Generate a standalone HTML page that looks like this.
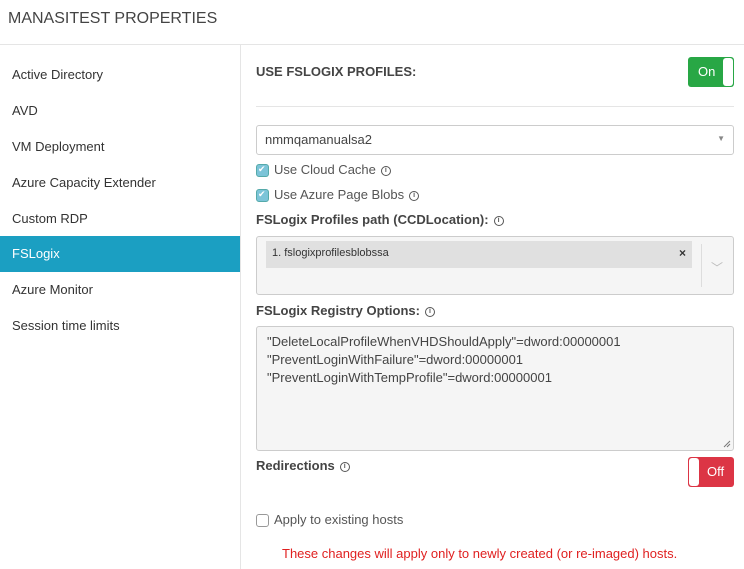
<!DOCTYPE html>
<html><head><style>
*{box-sizing:border-box;margin:0;padding:0}
body{width:744px;height:569px;overflow:hidden;background:#fff;font-family:"Liberation Sans",sans-serif;color:#333;font-size:13px;position:relative}
.hdr{position:absolute;left:0;top:0;width:744px;height:45px;border-bottom:1px solid #e5e5e5;padding:10px 8px;font-size:16px;color:#444}
.side{position:absolute;left:0;top:45px;width:241px;height:524px;border-right:1px solid #e5e5e5}
.side div{height:36px;line-height:36px;padding-left:12px;font-size:13px;color:#333}
.side .act{background:#1b9fc2;color:#fff}
.a{position:absolute}
.b{font-weight:bold;color:#444}
.tog{position:absolute;width:46px;height:30px;border-radius:3px;color:#fff;font-size:13px;line-height:30px}
.info{display:inline-block;width:10px;height:10px;border:1px solid #555;border-radius:50%;font-size:7px;line-height:8px;text-align:center;vertical-align:middle;margin-left:5px;font-weight:bold;color:#555}
.cb{position:absolute;width:13px;height:13px;border-radius:3px}
</style></head><body>
<div class="hdr">MANASITEST PROPERTIES</div>
<div class="side">
<div style="margin-top:12px">Active Directory</div><div>AVD</div><div>VM Deployment</div><div>Azure Capacity Extender</div><div>Custom RDP</div><div class="act" style="margin-top:-1px">FSLogix</div><div>Azure Monitor</div><div>Session time limits</div>
</div>
<div class="a b" style="left:256px;top:64px;font-size:13px">USE FSLOGIX PROFILES:</div>
<div class="tog" style="left:688px;top:57px;background:#28a745;padding-left:10px">On<span style="position:absolute;right:1px;top:1px;width:10px;height:28px;background:#fff;border-radius:3px"></span></div>
<div class="a" style="left:256px;top:106px;width:478px;height:1px;background:#e5e5e5"></div>
<div class="a" style="left:256px;top:125px;width:478px;height:30px;border:1px solid #ccc;border-radius:3px;padding:6px 8px;color:#444">nmmqamanualsa2<span style="position:absolute;right:8px;top:8px;font-size:8px;color:#888">▼</span></div>
<div class="cb" style="left:256px;top:164px;background:#7cc4d8;border:1px solid #5aa"><span style="color:#fff;font-size:9px;position:absolute;left:1px;top:-1px">✔</span></div>
<div class="a" style="left:274px;top:162px;color:#555">Use Cloud Cache<span class="info">i</span></div>
<div class="cb" style="left:256px;top:189px;background:#7cc4d8;border:1px solid #5aa"><span style="color:#fff;font-size:9px;position:absolute;left:1px;top:-1px">✔</span></div>
<div class="a" style="left:274px;top:187px;color:#555">Use Azure Page Blobs<span class="info">i</span></div>
<div class="a b" style="left:256px;top:212px">FSLogix Profiles path (CCDLocation):<span class="info">i</span></div>
<div class="a" style="left:256px;top:236px;width:478px;height:59px;border:1px solid #ccc;border-radius:3px;background:#f5f5f5">
<div class="a" style="left:9px;top:4px;width:426px;height:27px;background:#e0e0e0;padding:6px 6px;font-size:11px">1. fslogixprofilesblobssa<span style="position:absolute;right:6px;top:5px;font-weight:bold;font-size:12px">×</span></div>
<div class="a" style="left:444px;top:7px;width:1px;height:43px;background:#ddd"></div>
<div class="a" style="left:454px;top:22px;color:#bbb;font-size:12px">﹀</div>
</div>
<div class="a b" style="left:256px;top:303px">FSLogix Registry Options:<span class="info">i</span></div>
<div class="a" style="left:256px;top:326px;width:478px;height:125px;border:1px solid #ccc;border-radius:3px;background:#f5f5f5;padding:6px 10px;line-height:18px;color:#444">"DeleteLocalProfileWhenVHDShouldApply"=dword:00000001<br>"PreventLoginWithFailure"=dword:00000001<br>"PreventLoginWithTempProfile"=dword:00000001
<svg class="a" style="right:2px;bottom:2px" width="8" height="8"><path d="M1 7L7 1M4 7L7 4" stroke="#777" stroke-width="1"/></svg></div>
<div class="a b" style="left:256px;top:458px">Redirections<span class="info">i</span></div>
<div class="tog" style="left:688px;top:457px;background:#dc3545;padding-left:19px">Off<span style="position:absolute;left:1px;top:1px;width:10px;height:28px;background:#fff;border-radius:3px"></span></div>
<div class="cb" style="left:256px;top:514px;border:1px solid #999;background:#fff"></div>
<div class="a" style="left:274px;top:512px;color:#555">Apply to existing hosts</div>
<div class="a" style="left:282px;top:546px;color:#e02020">These changes will apply only to newly created (or re-imaged) hosts.</div>
</body></html>
